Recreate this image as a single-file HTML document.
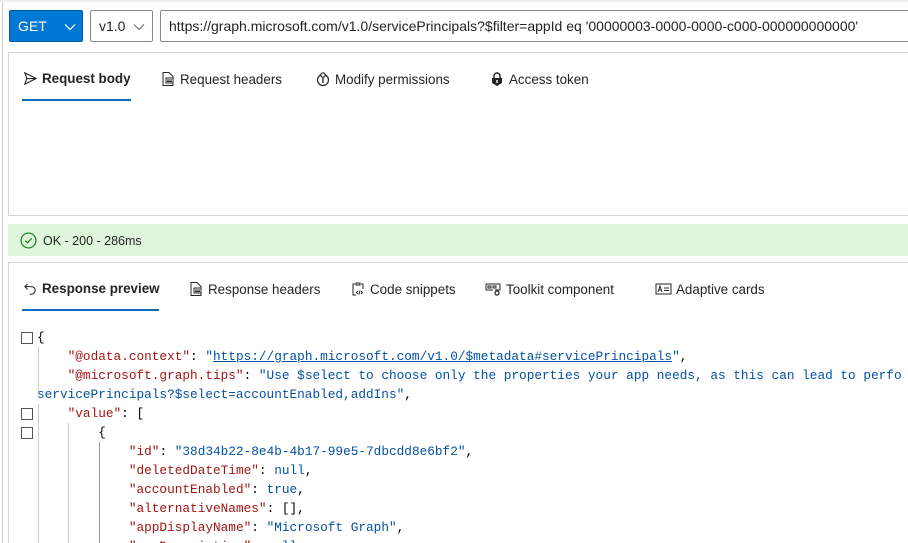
<!DOCTYPE html>
<html><head><meta charset="utf-8"><style>
*{box-sizing:border-box;margin:0;padding:0}
html,body{width:908px;height:543px;overflow:hidden}
body{background:#fff;font-family:"Liberation Sans",sans-serif;position:relative;color:#242424}
.a{position:absolute}
.tab{position:absolute;font-size:13.4px;white-space:nowrap;color:#242424}
.tab svg{vertical-align:-3px;margin-right:4px}
.clip{position:absolute;left:0;top:0;width:908px;height:543px;overflow:hidden}
pre{position:absolute;left:37px;top:328px;font-family:"Liberation Mono",monospace;font-size:12.75px;line-height:19px;color:#000}
.k{color:#a31515}.s{color:#0451a5}
.u{text-decoration:underline}
.cb{position:absolute;left:21px;width:12px;height:12px;border:1px solid #555;background:#fff}
.g{position:absolute;width:1px;background:#ccc}
</style></head><body><div class="clip">
<div class="a" style="left:2px;top:0;width:1px;height:543px;background:#ccc"></div>
<div class="a" style="left:0;top:0;width:908px;height:2px;background:#eee"></div>
<div class="a" style="left:9px;top:10px;width:74px;height:32px;background:#0078d4;border:1px solid #005a9e;border-radius:2px;color:#fff;font-size:14px;padding:7px 0 0 8px">GET
<svg class="a" style="left:54px;top:12px" width="12" height="8" viewBox="0 0 12 8"><path d="M1 1.5l5 5 5-5" stroke="#fff" fill="none" stroke-width="1.2"/></svg></div>
<div class="a" style="left:90px;top:10px;width:63px;height:32px;border:1px solid #8a8a8a;border-radius:2px;font-size:14px;padding:7px 0 0 8px">v1.0
<svg class="a" style="left:42px;top:12px" width="12" height="8" viewBox="0 0 12 8"><path d="M1 1.5l5 5 5-5" stroke="#666" fill="none" stroke-width="1.1"/></svg></div>
<div class="a" style="left:160px;top:10px;width:748px;height:32px;border:1px solid #8a8a8a;border-right:none;border-radius:2px 0 0 2px;font-size:14px;padding:7px 0 0 8px;white-space:nowrap;overflow:hidden">https://graph.microsoft.com/v1.0/servicePrincipals?$filter=appId eq '00000003-0000-0000-c000-000000000000'</div>

<div class="a" style="left:8px;top:52px;width:900px;height:164px;border:1px solid #d6d6d6;border-right:none"></div>
<div class="tab" style="left:23px;top:71px;font-weight:bold"><svg width="15" height="15" viewBox="0 0 16 16"><path d="M2 2l12 6-12 6 2-6z M4 8h9" stroke="#242424" fill="none" stroke-width="1.2"/></svg>Request body</div>
<div class="a" style="left:22px;top:99px;width:109px;height:2px;background:#0f6cbd"></div>
<div class="tab" style="left:160px;top:71px"><svg width="16" height="16" viewBox="0 0 16 16"><path d="M3 1.5h6l4 4v9H3z M6 7h7v5H6z M7 9h5M7 10.5h5" stroke="#242424" fill="none" stroke-width="1"/></svg>Request headers</div>
<div class="tab" style="left:315px;top:71px"><svg width="16" height="16" viewBox="0 0 16 16"><circle cx="8" cy="9" r="5.5" stroke="#242424" fill="none" stroke-width="1.2"/><circle cx="8" cy="4" r="2.2" stroke="#242424" fill="#fff" stroke-width="1.2"/><path d="M8 7v5" stroke="#242424" stroke-width="1.4"/></svg>Modify permissions</div>
<div class="tab" style="left:489px;top:71px"><svg width="16" height="16" viewBox="0 0 16 16"><path d="M5 7V5a3 3 0 016 0v2" stroke="#242424" fill="none" stroke-width="1.5"/><path d="M3 7h10v5l-5 3-5-3z" fill="#242424"/><rect x="7.3" y="9" width="1.4" height="3" fill="#fff"/></svg>Access token</div>

<div class="a" style="left:8px;top:224px;width:900px;height:32px;background:#dff6dd"></div>
<div class="a" style="left:20px;top:232px;font-size:12.5px;color:#242424"><svg width="17" height="17" viewBox="0 0 16 16" style="vertical-align:-4px;margin-right:6px"><circle cx="8" cy="8" r="7" stroke="#107c10" fill="none" stroke-width="1.1"/><path d="M5 8.2l2 2 4-4.2" stroke="#107c10" fill="none" stroke-width="1.1"/></svg>OK - 200 - 286ms</div>

<div class="a" style="left:8px;top:262px;width:900px;height:290px;border:1px solid #d6d6d6;border-right:none;border-bottom:none"></div>
<div class="tab" style="left:23px;top:281px;font-weight:bold"><svg width="15" height="15" viewBox="0 0 16 16"><path d="M5 3L2 6l3 3M2 6h7a4 4 0 010 8H7" stroke="#242424" fill="none" stroke-width="1.1"/></svg>Response preview</div>
<div class="a" style="left:22px;top:309px;width:137px;height:2px;background:#0f6cbd"></div>
<div class="tab" style="left:188px;top:281px"><svg width="16" height="16" viewBox="0 0 16 16"><path d="M3 1.5h6l4 4v9H3z M6 7h7v5H6z M7 9h5M7 10.5h5" stroke="#242424" fill="none" stroke-width="1"/></svg>Response headers</div>
<div class="tab" style="left:350px;top:281px"><svg width="16" height="16" viewBox="0 0 16 16"><path d="M5 3H3v11h3M11 3h2v5M6 2h4v2H6z M8 10l-1.5 1.5L8 13M10 9.5l-1 4M11 10l1.5 1.5L11 13" stroke="#242424" fill="none" stroke-width="1"/></svg>Code snippets</div>
<div class="tab" style="left:485px;top:281px"><svg width="17" height="16" viewBox="0 0 17 16"><path d="M1 3h14v6H10M1 3v6h7M3 5h3v2H3zM8 5h3v2H8z" stroke="#242424" fill="none" stroke-width="1"/><circle cx="12" cy="12" r="2" stroke="#242424" fill="none" stroke-width="1.2"/></svg>Toolkit component</div>
<div class="tab" style="left:655px;top:281px"><svg width="17" height="16" viewBox="0 0 17 16"><rect x="1" y="3" width="15" height="10" stroke="#242424" fill="none"/><path d="M3 11l2-6 2 6M3.7 9h2.6M9 7h5M9 9.5h5" stroke="#242424" fill="none"/></svg>Adaptive cards</div>

<div class="cb" style="top:332px"></div>
<div class="cb" style="top:408px"></div>
<div class="cb" style="top:427px"></div>
<div class="g" style="left:38px;top:347px;height:45px"></div>
<div class="g" style="left:38px;top:404px;height:140px"></div>
<div class="g" style="left:68px;top:423px;height:120px"></div>
<div class="g" style="left:99px;top:442px;height:101px;background:#999"></div>
<pre>{
    <span class="k">"@odata.context"</span>: <span class="s">"<span class="u">https://graph.microsoft.com/v1.0/$metadata#servicePrincipals</span>"</span>,
    <span class="k">"@microsoft.graph.tips"</span>: <span class="s">"Use $select to choose only the properties your app needs, as this can lead to perfo</span>
<span class="s">servicePrincipals?$select=accountEnabled,addIns"</span>,
    <span class="k">"value"</span>: [
        {
            <span class="k">"id"</span>: <span class="s">"38d34b22-8e4b-4b17-99e5-7dbcdd8e6bf2"</span>,
            <span class="k">"deletedDateTime"</span>: <span class="s">null</span>,
            <span class="k">"accountEnabled"</span>: <span class="s">true</span>,
            <span class="k">"alternativeNames"</span>: [],
            <span class="k">"appDisplayName"</span>: <span class="s">"Microsoft Graph"</span>,
            <span class="k">"appDescription"</span>: <span class="s">null</span>,
</pre>
</div></body></html>
